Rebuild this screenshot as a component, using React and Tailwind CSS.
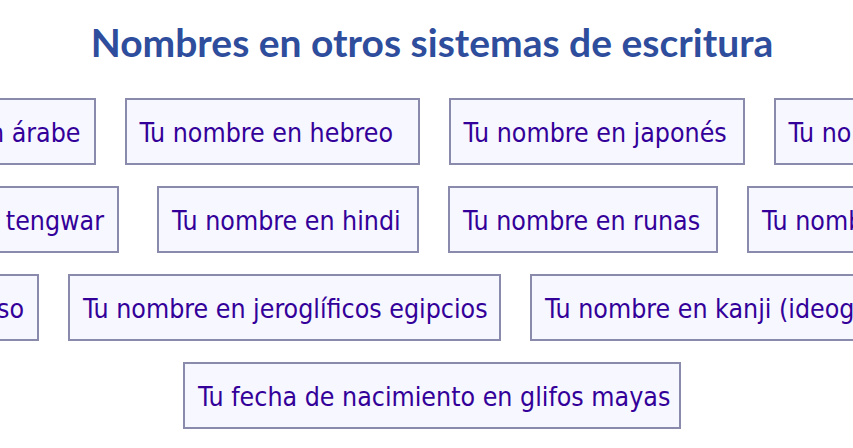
const ROWS = [
  {
    items: [
      { label: "Tu nombre en árabe", w: "w-[282px]", left: true },
      { label: "Tu nombre en hebreo", w: "w-[295px]" },
      { label: "Tu nombre en japonés", w: "w-[296px]" },
      { label: "Tu nombre en chino", w: "w-[277px]" },
    ],
  },
  {
    items: [
      { label: "Tu nombre en tengwar", w: "w-[300px]", left: true, extra: "mr-[9px]" },
      { label: "Tu nombre en hindi", w: "w-[262px]" },
      { label: "Tu nombre en runas", w: "w-[270px]" },
      { label: "Tu nombre en coreano", w: "w-[298px]" },
    ],
  },
  {
    items: [
      { label: "Tu nombre en ruso", w: "w-[146px]", left: true },
      { label: "Tu nombre en jeroglíficos egipcios", w: "w-[433px]" },
      { label: "Tu nombre en kanji (ideogramas)", w: "w-[441px]" },
    ],
  },
  {
    items: [
      { label: "Tu fecha de nacimiento en glifos mayas", w: "w-[498px]" },
    ],
  },
]

function NameButton({ label, w, left, extra }) {
  return (
    <a
      href="#"
      className={
        (left ? "justify-end pr-[13px] " : "justify-start pl-[13px] ") +
        w +
        " " +
        (extra || "") +
        " shrink-0 h-[67px] flex items-center overflow-hidden whitespace-nowrap border-2 border-[#8a8aad] bg-[#f7f7ff] text-[#330099] text-[26.5px] pt-[3px] no-underline"
      }
      style={{ fontFamily: '"DejaVu Sans Condensed", "DejaVu Sans", sans-serif' }}
    >
      {label}
    </a>
  )
}

export default function App() {
  return (
    <div className="w-full h-[448px] overflow-hidden bg-white pl-[11px]">
      <h1
        className="text-center font-bold text-[39px] leading-[1.2] text-[#2e4d9c] pt-[19px]"
        style={{ fontFamily: "Lato, sans-serif" }}
      >
        Nombres en otros sistemas de escritura
      </h1>

      <div className="flex flex-col gap-[21px] mt-[32px]">
        {ROWS.map((row, i) => (
          <div key={i} className="flex justify-center gap-[29px]">
            {row.items.map((item) => (
              <NameButton key={item.label} {...item} />
            ))}
          </div>
        ))}
      </div>
    </div>
  )
}
